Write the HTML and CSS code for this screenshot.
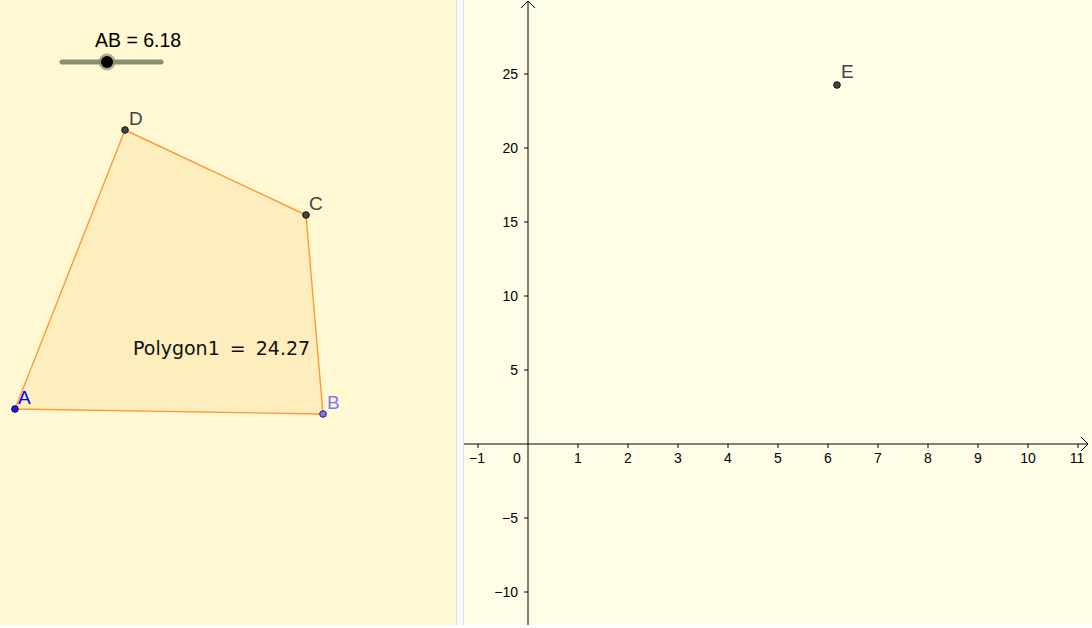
FILE: index.html
```html
<!DOCTYPE html>
<html>
<head>
<meta charset="utf-8">
<link rel="stylesheet" href="styles.css">
</head>
<body>
<div class="applet">
  <div class="view view-left">
    <svg class="canvas" width="456" height="625" viewBox="0 0 456 625">
      <text class="slider-label" x="95" y="47">AB = 6.18</text>
      <line class="slider-track" x1="62" y1="62" x2="161" y2="62"/>
      <circle class="slider-halo" cx="107" cy="62" r="8.5"/>
      <circle class="slider-knob" cx="107" cy="62" r="6"/>
      <polygon class="poly" points="15,409 323,414 306,215 125,130"/>
      <text class="poly-label" x="133" y="355">Polygon1 <tspan dx="4">=</tspan> <tspan dx="4">24.27</tspan></text>
      <circle class="pt" cx="125" cy="130" r="3.3"/>
      <circle class="pt" cx="306" cy="215" r="3.3"/>
      <circle class="pt pt-a" cx="15" cy="409" r="3.3"/>
      <circle class="pt pt-b" cx="323" cy="414" r="3.3"/>
      <text class="pt-label" x="129" y="125">D</text>
      <text class="pt-label" x="309" y="210">C</text>
      <text class="pt-label lab-a" x="18" y="404">A</text>
      <text class="pt-label lab-b" x="327" y="409">B</text>
    </svg>
  </div>
  <div class="divider"></div>
  <div class="view view-right">
    <svg class="canvas" width="628" height="625" viewBox="464 0 628 625">
      <line class="axis" x1="464" y1="444" x2="1088" y2="444"/>
      <polyline class="axis" points="1081,437 1088,444 1081,451"/>
      <line class="axis" x1="528" y1="625" x2="528" y2="1"/>
      <polyline class="axis" points="521,8 528,1 535,8"/>
      <g class="ticks">
        <line x1="478" y1="444" x2="478" y2="448"/>
        <line x1="578" y1="444" x2="578" y2="448"/>
        <line x1="628" y1="444" x2="628" y2="448"/>
        <line x1="678" y1="444" x2="678" y2="448"/>
        <line x1="728" y1="444" x2="728" y2="448"/>
        <line x1="778" y1="444" x2="778" y2="448"/>
        <line x1="828" y1="444" x2="828" y2="448"/>
        <line x1="878" y1="444" x2="878" y2="448"/>
        <line x1="928" y1="444" x2="928" y2="448"/>
        <line x1="978" y1="444" x2="978" y2="448"/>
        <line x1="1028" y1="444" x2="1028" y2="448"/>
        <line x1="1078" y1="444" x2="1078" y2="448"/>
        <line x1="524" y1="74" x2="528" y2="74"/>
        <line x1="524" y1="148" x2="528" y2="148"/>
        <line x1="524" y1="222" x2="528" y2="222"/>
        <line x1="524" y1="296" x2="528" y2="296"/>
        <line x1="524" y1="370" x2="528" y2="370"/>
        <line x1="524" y1="518" x2="528" y2="518"/>
        <line x1="524" y1="592" x2="528" y2="592"/>
      </g>
      <g class="xlabels">
        <text x="477" y="463">−1</text>
        <text x="517" y="463">0</text>
        <text x="578" y="463">1</text>
        <text x="628" y="463">2</text>
        <text x="678" y="463">3</text>
        <text x="728" y="463">4</text>
        <text x="778" y="463">5</text>
        <text x="828" y="463">6</text>
        <text x="878" y="463">7</text>
        <text x="928" y="463">8</text>
        <text x="978" y="463">9</text>
        <text x="1028" y="463">10</text>
        <text x="1077" y="463">11</text>
      </g>
      <g class="ylabels">
        <text x="518" y="79">25</text>
        <text x="518" y="153">20</text>
        <text x="518" y="227">15</text>
        <text x="518" y="301">10</text>
        <text x="518" y="375">5</text>
        <text x="518" y="523">−5</text>
        <text x="518" y="597">−10</text>
      </g>
      <circle class="pt" cx="837" cy="85" r="3.3"/>
      <text class="pt-label" x="841" y="78">E</text>
    </svg>
  </div>
</div>
</body>
</html>
```
FILE: styles.css
```css
html, body {
  margin: 0;
  padding: 0;
  background: #ffffff;
}
body {
  width: 1092px;
  height: 628px;
  overflow: hidden;
  font-family: "Liberation Sans", Arial, sans-serif;
}
.applet {
  display: flex;
  height: 625px;
}
.view {
  height: 625px;
  overflow: hidden;
}
.view-left {
  width: 456px;
  background: #fff8d3;
}
.divider {
  width: 6px;
  background: #f8f8f8;
  border-left: 1px solid #dedede;
  border-right: 1px solid #dedede;
}
.view-right {
  flex: 1;
  background: #fffde7;
}
.canvas {
  display: block;
}
.slider-label {
  font-family: "Liberation Sans", Arial, sans-serif;
  font-size: 19.5px;
  fill: #000;
}
.slider-track {
  stroke: #8e8e72;
  stroke-width: 5;
  stroke-linecap: round;
}
.slider-halo {
  fill: #8e8e72;
  fill-opacity: 0.7;
}
.slider-knob {
  fill: #000;
}
.poly {
  fill: #ff9900;
  fill-opacity: 0.1;
  stroke: #ff9933;
  stroke-width: 1.4;
  stroke-linejoin: round;
}
.poly-label {
  font-family: "DejaVu Sans", "Liberation Sans", sans-serif;
  font-size: 19px;
  fill: #111;
}
.pt {
  fill: #444;
  stroke: #111;
  stroke-width: 1;
}
.pt-a {
  fill: #1a1aff;
  stroke: #000044;
}
.pt-b {
  fill: #7a7aff;
  stroke: #222244;
}
.pt-label {
  font-family: "Liberation Sans", Arial, sans-serif;
  font-size: 19px;
  fill: #444;
}
.lab-a {
  fill: #0000ff;
}
.lab-b {
  fill: #7b7bff;
}
.axis {
  stroke: #000;
  stroke-width: 1;
  fill: none;
}
.ticks line {
  stroke: #000;
  stroke-width: 1;
}
.xlabels text {
  font-family: "Liberation Sans", Arial, sans-serif;
  font-size: 14px;
  fill: #000;
  text-anchor: middle;
}
.ylabels text {
  font-family: "Liberation Sans", Arial, sans-serif;
  font-size: 14px;
  fill: #000;
  text-anchor: end;
}
```
